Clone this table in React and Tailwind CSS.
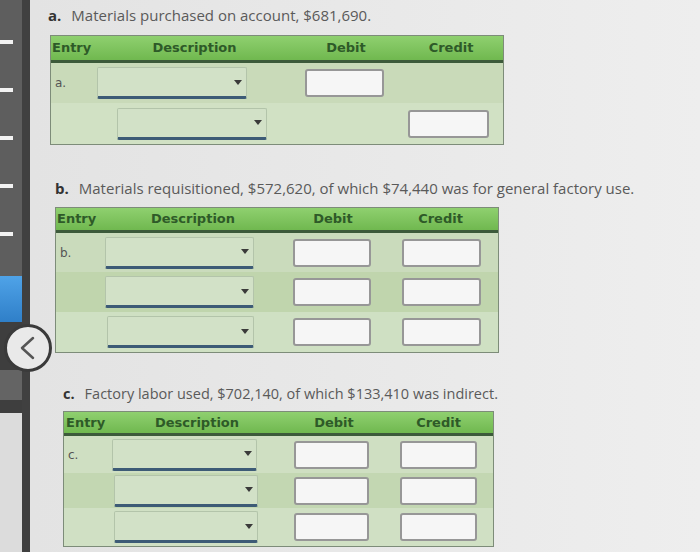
import React from "react";

const tables = [
  {
    letter: "a.",
    text: "Materials purchased on account, $681,690.",
    textBox: "ml-[18px] pt-[5px] text-[15px]",
    box: "ml-[20px] mt-[10px] w-[454px]",
    cols: "grid-cols-[45px_197px_106px_104px]",
    head: "h-[27px]",
    entryPad: "pl-[1px]",
    rows: [
      { h: "h-[40px]", bg: "bg-[#c9dab9]", sel: "ml-[1px] w-[150px]", debit: "ml-[12px] w-[79px]" },
      { h: "h-[41px]", bg: "bg-[#d1e1c4]", sel: "ml-[21px] w-[150px]", credit: "ml-[9px] w-[81px]" },
    ],
  },
  {
    letter: "b.",
    text: "Materials requisitioned, $572,620, of which $74,440 was for general factory use.",
    textBox: "ml-[25px] mt-[33px] text-[15px]",
    box: "ml-[25px] mt-[9px] w-[444px]",
    cols: "grid-cols-[47px_180px_100px_115px]",
    head: "h-[25px]",
    entryPad: "pl-[1px]",
    rows: [
      { h: "h-[39px]", bg: "bg-[#cadbbc]", sel: "ml-[2px] w-[149px]", debit: "ml-[10px] w-[78px]", credit: "ml-[19px] w-[79px]" },
      { h: "h-[40px]", bg: "bg-[#c0d5ad]", sel: "ml-[2px] w-[149px]", debit: "ml-[10px] w-[78px]", credit: "ml-[19px] w-[79px]" },
      { h: "h-[40px]", bg: "bg-[#cfe0c3]", sel: "ml-[4px] w-[147px]", debit: "ml-[10px] w-[78px]", credit: "ml-[19px] w-[79px]" },
    ],
  },
  {
    letter: "c.",
    text: "Factory labor used, $702,140, of which $133,410 was indirect.",
    textBox: "ml-[33px] mt-[31px] text-[14.5px]",
    box: "ml-[33px] mt-[7px] w-[431px]",
    cols: "grid-cols-[46px_174px_100px_109px]",
    head: "h-[24px]",
    entryPad: "pl-[2px]",
    rows: [
      { h: "h-[37px]", bg: "bg-[#cfdfc2]", sel: "ml-[2px] w-[145px]", debit: "ml-[10px] w-[75px]", credit: "ml-[16px] w-[77px]" },
      { h: "h-[35px]", bg: "bg-[#c3d7b2]", sel: "ml-[4px] w-[144px]", debit: "ml-[10px] w-[75px]", credit: "ml-[16px] w-[77px]" },
      { h: "h-[38px]", bg: "bg-[#d0e0c4]", sel: "ml-[4px] w-[144px]", debit: "ml-[10px] w-[75px]", credit: "ml-[16px] w-[77px]" },
    ],
  },
];

function Select({ className }) {
  return (
    <div
      className={`flex h-[32px] items-center justify-end rounded-[2px] border border-[#b3c4aa] border-b-[3px] border-b-[#3d5b76] bg-[#d2e1c7] pr-[4px] ${className}`}
    >
      <span className="h-0 w-0 border-x-[4px] border-t-[5px] border-x-transparent border-t-[#3a3a3a]" />
    </div>
  );
}

function Amount({ className }) {
  return <div className={`h-[28px] rounded-[3px] border-2 border-[#979797] bg-[#f6f6f6] ${className}`} />;
}

function Journal({ t }) {
  return (
    <>
      <p className={`leading-[20px] text-[#5a5a5a] ${t.textBox}`} style={{ fontFamily: "'Open Sans', sans-serif" }}>
        <span className="mr-[10px] font-bold text-[#333]">{t.letter}</span>
        {t.text}
      </p>

      {/* Journal table */}
      <div className={`border border-[#7d8c79] ${t.box}`} style={{ fontFamily: "'DejaVu Sans', Verdana, sans-serif" }}>
        <div
          className={`grid ${t.cols} ${t.head} items-center border-b-[3px] border-[#3c5a3a] bg-linear-to-b from-[#8fd06f] to-[#70b84f] text-[13px] font-bold text-[#2e5a28]`}
        >
          <span className={t.entryPad}>Entry</span>
          <span className="text-center">Description</span>
          <span className="text-center">Debit</span>
          <span className="text-center">Credit</span>
        </div>
        {t.rows.map((r, i) => (
          <div key={i} className={`grid ${t.cols} ${r.h} items-center ${r.bg}`}>
            <span className="pl-[4px] text-[12px] text-[#555]">{i === 0 ? t.letter : ""}</span>
            <div className="flex">
              <Select className={r.sel} />
            </div>
            <div className="flex">{r.debit && <Amount className={r.debit} />}</div>
            <div className="flex">{r.credit && <Amount className={r.credit} />}</div>
          </div>
        ))}
      </div>
    </>
  );
}

const App = () => {
  return (
    <div className="flex h-[552px] w-[700px] overflow-hidden">
      {/* Sidebar strip */}
      <div className="relative flex w-[30px] shrink-0 flex-col border-r-[8px] border-[#404040]">
        <div className="flex h-[276px] flex-col gap-[44px] bg-[#5e5e5e] pt-[40px]">
          {[0, 1, 2, 3, 4].map((i) => (
            <div key={i} className="h-[4px] w-[13px] bg-[#f2f2f2]" />
          ))}
        </div>
        <div className="h-[46px] bg-linear-to-b from-[#4fa3e8] to-[#2f7fc8]" />
        <div className="h-[48px] bg-[#3e3e3e]" />
        <div className="h-[30px] bg-[#646464]" />
        <div className="h-[13px] bg-[#3e3e3e]" />
        <div className="flex-1 bg-[#dcdcdc]" />

        {/* Collapse button */}
        <div className="absolute left-[4px] top-[324px] flex h-[48px] w-[48px] items-center justify-center rounded-full border-[3px] border-[#3a3a3a] bg-[#e9e9e9]">
          <svg width="18" height="24" viewBox="0 0 18 24" fill="none">
            <path d="M14 2 L3 12 L14 22" stroke="#555" strokeWidth="2.5" strokeLinecap="round" strokeLinejoin="round" />
          </svg>
        </div>
      </div>

      {/* Main content */}
      <div className="flex-1 bg-linear-to-r from-[#e3e3e3] to-[#eeeeee]">
        {tables.map((t) => (
          <Journal key={t.letter} t={t} />
        ))}
      </div>
    </div>
  );
};

export default App;
